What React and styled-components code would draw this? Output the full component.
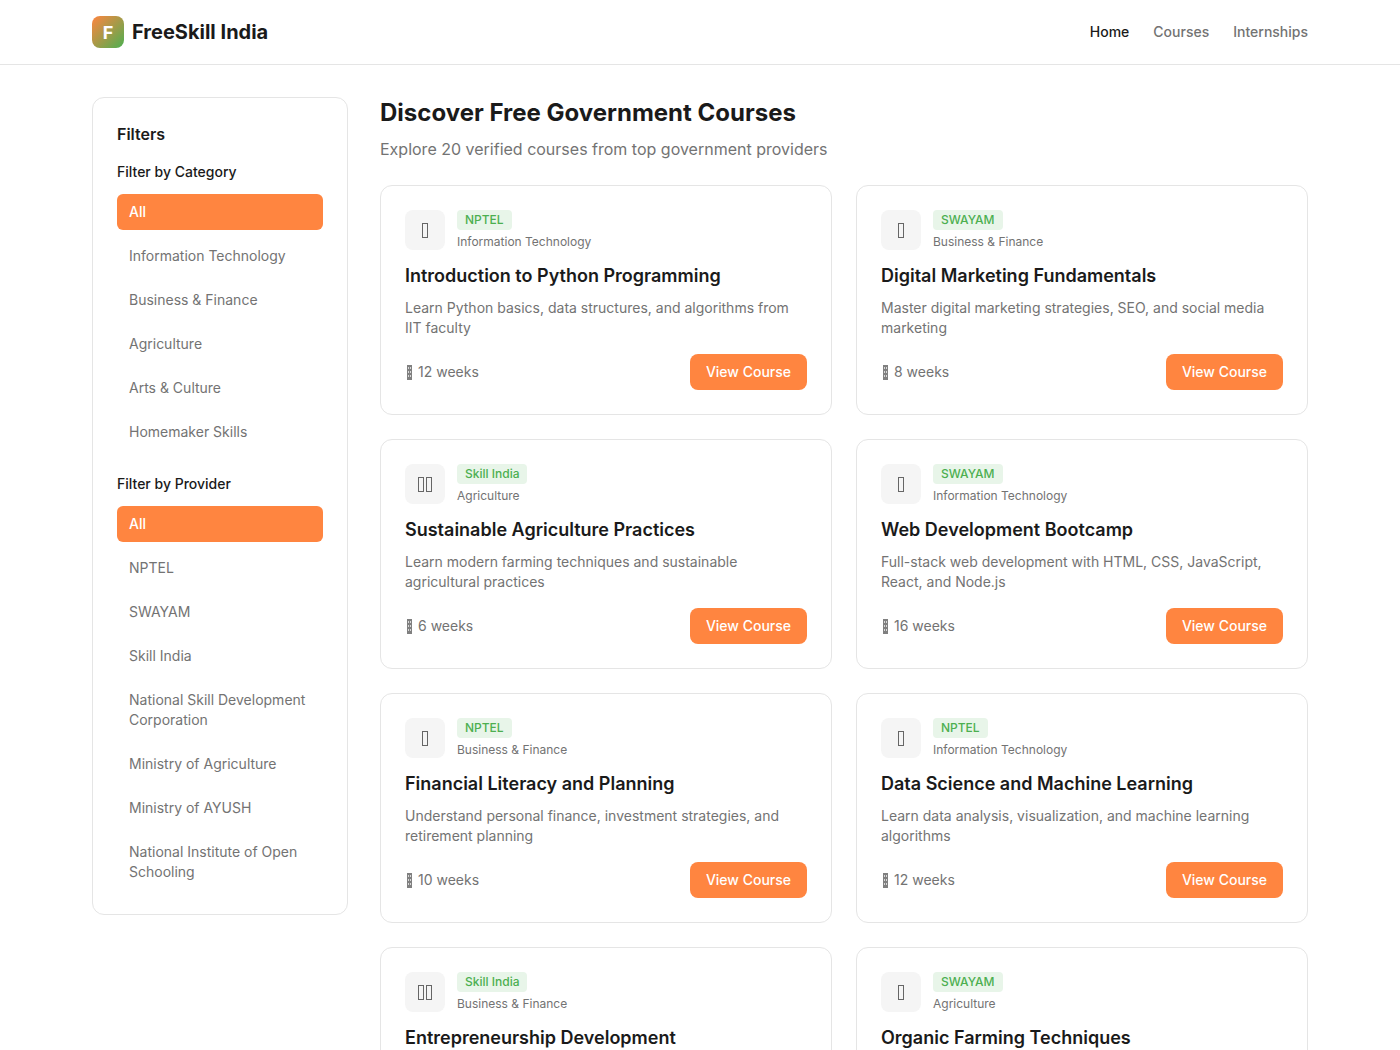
import styled, { createGlobalStyle } from "styled-components"

const GlobalStyle = createGlobalStyle`
    * {
        box-sizing: border-box;
        margin: 0;
        padding: 0;
    }
    body {
        font-family: Inter, "Noto Sans", sans-serif;
        background: #ffffff;
        color: #1a1a1a;
        line-height: 1.5;
    }
`

const categories = ["All", "Information Technology", "Business & Finance", "Agriculture", "Arts & Culture", "Homemaker Skills"]

const providers = [
    "All",
    "NPTEL",
    "SWAYAM",
    "Skill India",
    "National Skill Development Corporation",
    "Ministry of Agriculture",
    "Ministry of AYUSH",
    "National Institute of Open Schooling",
]

const courses = [
    { boxes: 1, provider: "NPTEL", category: "Information Technology", title: "Introduction to Python Programming", text: "Learn Python basics, data structures, and algorithms from IIT faculty", weeks: 12 },
    { boxes: 1, provider: "SWAYAM", category: "Business & Finance", title: "Digital Marketing Fundamentals", text: "Master digital marketing strategies, SEO, and social media marketing", weeks: 8 },
    { boxes: 2, provider: "Skill India", category: "Agriculture", title: "Sustainable Agriculture Practices", text: "Learn modern farming techniques and sustainable agricultural practices", weeks: 6 },
    { boxes: 1, provider: "SWAYAM", category: "Information Technology", title: "Web Development Bootcamp", text: "Full-stack web development with HTML, CSS, JavaScript, React, and Node.js", weeks: 16 },
    { boxes: 1, provider: "NPTEL", category: "Business & Finance", title: "Financial Literacy and Planning", text: "Understand personal finance, investment strategies, and retirement planning", weeks: 10 },
    { boxes: 1, provider: "NPTEL", category: "Information Technology", title: "Data Science and Machine Learning", text: "Learn data analysis, visualization, and machine learning algorithms", weeks: 12 },
    { boxes: 2, provider: "Skill India", category: "Business & Finance", title: "Entrepreneurship Development", text: "Build and grow your own business with practical entrepreneurship skills", weeks: 8 },
    { boxes: 1, provider: "SWAYAM", category: "Agriculture", title: "Organic Farming Techniques", text: "Learn organic farming methods and soil health management", weeks: 8 },
]

const Header = styled.header`
    height: 65px;
    border-bottom: 1px solid #e5e5e5;
`

const HeaderInner = styled.div`
    max-width: 1280px;
    height: 64px;
    margin: 0 auto;
    padding: 0 32px;
    display: flex;
    align-items: center;
    justify-content: space-between;
`

const Brand = styled.div`
    display: flex;
    align-items: center;
    gap: 8px;
    font-size: 20px;
    font-weight: 700;
`

const Logo = styled.div`
    width: 32px;
    height: 32px;
    border-radius: 8px;
    background: linear-gradient(135deg, #ff8540, #4caf50);
    color: #ffffff;
    display: flex;
    align-items: center;
    justify-content: center;
    font-size: 18px;
    font-weight: 700;
`

const Nav = styled.nav`
    display: flex;
    gap: 24px;
`

const NavLink = styled.a`
    display: block;
    font-size: 14px;
    font-weight: 500;
    line-height: 20px;
    color: ${({ $active }) => ($active ? "#1a1a1a" : "#737373")};
`

const Layout = styled.div`
    max-width: 1280px;
    margin: 0 auto;
    padding: 32px;
    display: grid;
    grid-template-columns: 256px 1fr;
    gap: 32px;
    align-items: start;
`

const Sidebar = styled.aside`
    border: 1px solid #e5e5e5;
    border-radius: 12px;
    padding: 24px;
`

const SidebarTitle = styled.h3`
    font-size: 16px;
    font-weight: 600;
    line-height: 24px;
    margin-bottom: 15px;
`

const FilterGroup = styled.div`
    margin-bottom: 23px;

    &:last-child {
        margin-bottom: 0;
    }
`

const FilterLabel = styled.div`
    font-size: 14px;
    font-weight: 500;
    line-height: 21px;
    margin-bottom: 12px;
`

const FilterList = styled.div`
    display: flex;
    flex-direction: column;
    gap: 8px;
`

const FilterItem = styled.div`
    padding: 8px 12px;
    border-radius: 6px;
    font-size: 14px;
    line-height: 20px;
    background: ${({ $active }) => ($active ? "#ff8540" : "transparent")};
    color: ${({ $active }) => ($active ? "#ffffff" : "#737373")};
    font-weight: ${({ $active }) => ($active ? 500 : 400)};
`

const PageTitle = styled.h1`
    font-size: 24px;
    font-weight: 700;
    line-height: 32px;
    margin-bottom: 8px;
`

const PageSub = styled.p`
    font-size: 16px;
    line-height: 24px;
    color: #737373;
    margin-bottom: 24px;
`

const CourseGrid = styled.div`
    display: grid;
    grid-template-columns: 1fr 1fr;
    gap: 24px;
`

const Card = styled.article`
    border: 1px solid #e5e5e5;
    border-radius: 12px;
    padding: 24px;
`

const CardTop = styled.div`
    display: flex;
    gap: 12px;
    margin-bottom: 12px;
`

const IconBox = styled.div`
    width: 40px;
    height: 40px;
    border-radius: 8px;
    background: #f5f5f5;
    display: flex;
    align-items: center;
    justify-content: center;
    gap: 2px;
`

const MissingGlyph = styled.span`
    width: 6px;
    height: 15px;
    border: 1px solid #666666;
`

const Meta = styled.div`
    display: flex;
    flex-direction: column;
    align-items: flex-start;
`

const Badge = styled.span`
    padding: 2px 8px;
    border-radius: 4px;
    background: #e8f5e9;
    color: #4caf50;
    font-size: 12px;
    line-height: 16px;
    font-weight: 500;
`

const Category = styled.span`
    margin-top: 4px;
    font-size: 12px;
    line-height: 16px;
    color: #737373;
`

const CardTitle = styled.h2`
    font-size: 18px;
    font-weight: 600;
    line-height: 28px;
    margin-bottom: 8px;
`

const CardText = styled.p`
    font-size: 14px;
    line-height: 20px;
    color: #737373;
    margin-bottom: 16px;
`

const CardFooter = styled.div`
    display: flex;
    align-items: center;
    justify-content: space-between;
`

const Duration = styled.span`
    display: flex;
    align-items: center;
    gap: 4px;
    font-size: 14px;
    line-height: 20px;
    color: #737373;
`

const ViewButton = styled.button`
    border: none;
    border-radius: 8px;
    padding: 8px 16px;
    height: 36px;
    background: #ff8540;
    color: #ffffff;
    font-family: inherit;
    font-size: 14px;
    font-weight: 500;
    line-height: 20px;
`

// the hex box a browser draws for a character it has no font for
const HexBox = () => (
    <svg width="9" height="15" viewBox="0 0 9 15">
        <rect x="2" y="0" width="5" height="15" fill="#808080" />
        <rect x="3" y="2" width="1" height="2" fill="#d8d8d8" />
        <rect x="5" y="2" width="1" height="2" fill="#d8d8d8" />
        <rect x="3" y="6" width="1" height="2" fill="#d8d8d8" />
        <rect x="5" y="6" width="1" height="2" fill="#d8d8d8" />
        <rect x="3" y="10" width="1" height="2" fill="#d8d8d8" />
        <rect x="5" y="10" width="1" height="2" fill="#d8d8d8" />
    </svg>
)

export default function App() {
    return (
        <>
            <GlobalStyle />
            <Header>
                <HeaderInner>
                    <Brand>
                        <Logo>F</Logo>
                        FreeSkill India
                    </Brand>
                    <Nav>
                        <NavLink $active>Home</NavLink>
                        <NavLink>Courses</NavLink>
                        <NavLink>Internships</NavLink>
                    </Nav>
                </HeaderInner>
            </Header>
            <Layout>
                <Sidebar>
                    <SidebarTitle>Filters</SidebarTitle>
                    <FilterGroup>
                        <FilterLabel>Filter by Category</FilterLabel>
                        <FilterList>
                            {categories.map((item, i) => (
                                <FilterItem key={item} $active={i === 0}>{item}</FilterItem>
                            ))}
                        </FilterList>
                    </FilterGroup>
                    <FilterGroup>
                        <FilterLabel>Filter by Provider</FilterLabel>
                        <FilterList>
                            {providers.map((item, i) => (
                                <FilterItem key={item} $active={i === 0}>{item}</FilterItem>
                            ))}
                        </FilterList>
                    </FilterGroup>
                </Sidebar>
                <main>
                    <PageTitle>Discover Free Government Courses</PageTitle>
                    <PageSub>Explore 20 verified courses from top government providers</PageSub>
                    <CourseGrid>
                        {courses.map((course) => (
                            <Card key={course.title}>
                                <CardTop>
                                    <IconBox>
                                        {Array.from({ length: course.boxes }, (_, i) => <MissingGlyph key={i} />)}
                                    </IconBox>
                                    <Meta>
                                        <Badge>{course.provider}</Badge>
                                        <Category>{course.category}</Category>
                                    </Meta>
                                </CardTop>
                                <CardTitle>{course.title}</CardTitle>
                                <CardText>{course.text}</CardText>
                                <CardFooter>
                                    <Duration><HexBox />{course.weeks} weeks</Duration>
                                    <ViewButton>View Course</ViewButton>
                                </CardFooter>
                            </Card>
                        ))}
                    </CourseGrid>
                </main>
            </Layout>
        </>
    )
}
